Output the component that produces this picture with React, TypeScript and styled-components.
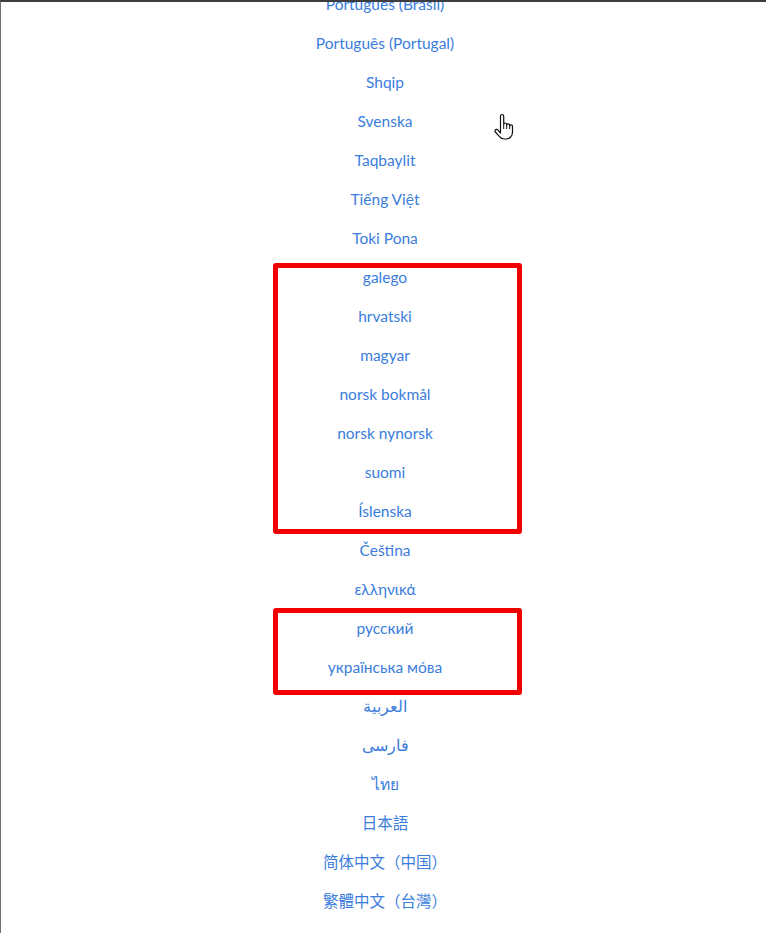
import React from 'react';
import styled, { createGlobalStyle } from 'styled-components';

const GlobalStyle = createGlobalStyle`
  html, body {
    margin: 0;
    padding: 0;
    background: #ffffff;
  }
  body {
    font-family: Lato, "Noto Sans", "Noto Sans CJK SC", sans-serif;
    overflow: hidden;
  }
`;

const languages = [
  'Português (Brasil)',
  'Português (Portugal)',
  'Shqip',
  'Svenska',
  'Taqbaylit',
  'Tiếng Việt',
  'Toki Pona',
  'galego',
  'hrvatski',
  'magyar',
  'norsk bokmål',
  'norsk nynorsk',
  'suomi',
  'Íslenska',
  'Čeština',
  'ελληνικά',
  'русский',
  'українська мо́ва',
  'العربية',
  'فارسی',
  'ไทย',
  '日本語',
  '简体中文（中国）',
  '繁體中文（台灣）',
];

export default function App() {
  return (
    <>
      <GlobalStyle />
      <Page>
        <LanguageList>
          {languages.map((lang) => (
            <LanguageItem key={lang}>
              <LanguageLink href="#">{lang}</LanguageLink>
            </LanguageItem>
          ))}
        </LanguageList>

        {/* annotation boxes drawn over the list */}
        <Highlight top={263} height={271} />
        <Highlight top={608} height={87} />

        <Cursor width="22" height="28" viewBox="0 0 22 28">
          <path
            d="M7.5 3.2c0-1 .7-1.7 1.6-1.7s1.6.7 1.6 1.7v8.3c0-.9.7-1.5 1.5-1.5s1.5.6 1.5 1.5v.8c0-.9.7-1.5 1.5-1.5s1.5.6 1.5 1.5v1c0-.8.6-1.4 1.4-1.4s1.4.6 1.4 1.4v5.6c0 4.2-2.9 7.1-6.6 7.1h-1.6c-2.2 0-3.8-1-5-2.7L2.3 19c-.6-.9-.4-1.9.4-2.4.8-.5 1.8-.3 2.4.5l2.4 3V3.2z"
            fill="#ffffff"
            stroke="#111111"
            strokeWidth="1.2"
            strokeLinejoin="round"
          />
          <path d="M10.7 11.5v4.5M13.7 12.3v3.7M16.7 13.3v2.8" stroke="#111111" strokeWidth="1" />
        </Cursor>
      </Page>
    </>
  );
}

const Page = styled.div`
  position: relative;
  width: 766px;
  height: 933px;
  box-sizing: border-box;
  border-top: 2px solid #3d3d3f;
  border-left: 1px solid #6f6f6f;
  overflow: hidden;
  background: #ffffff;
`;

const LanguageList = styled.ul`
  list-style: none;
  margin: -18px 0 0 0;
  padding: 0 0 0 3px;
  display: flex;
  flex-direction: column;
  align-items: center;
`;

const LanguageItem = styled.li`
  height: 39px;
  line-height: 39px;
  text-align: center;
`;

const LanguageLink = styled.a`
  color: #3a7ddc;
  font-size: 15.5px;
  text-decoration: none;
  white-space: nowrap;
`;

const Highlight = styled.div<{ top: number; height: number }>`
  position: absolute;
  left: 272px;
  top: ${(p) => p.top - 2}px;
  width: 249px;
  height: ${(p) => p.height}px;
  box-sizing: border-box;
  border: 5px solid #f20000;
  border-radius: 3px;
  pointer-events: none;
`;

const Cursor = styled.svg`
  position: absolute;
  left: 492px;
  top: 111px;
`;
